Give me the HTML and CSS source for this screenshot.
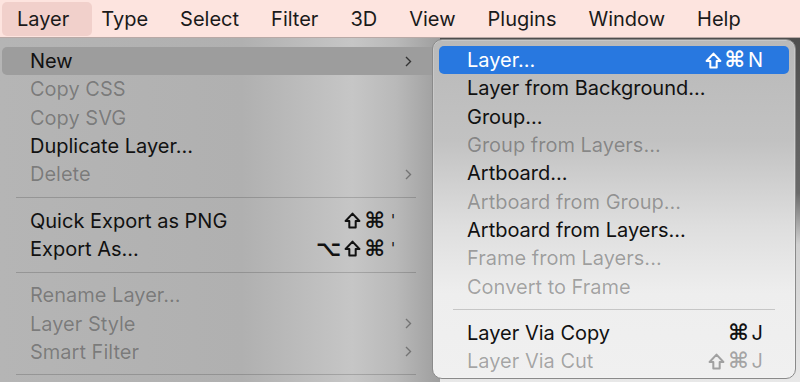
FILE: index.html
```html
<!DOCTYPE html>
<html lang="en">
<head>
  <meta charset="UTF-8">
  <title>Layer menu</title>
  <link rel="stylesheet" href="styles.css">
</head>
<body>
  <!-- menu bar -->
  <div class="menubar">
    <span class="bar-item active">Layer</span>
    <span class="bar-item">Type</span>
    <span class="bar-item">Select</span>
    <span class="bar-item">Filter</span>
    <span class="bar-item">3D</span>
    <span class="bar-item">View</span>
    <span class="bar-item">Plugins</span>
    <span class="bar-item">Window</span>
    <span class="bar-item">Help</span>
  </div>

  <div class="stage">
    <!-- Layer menu -->
    <div class="menu main-menu">
      <div class="row selected"><span>New</span><svg class="chev" viewBox="0 0 7 11"><path d="M1 1l4.5 4.5L1 10"/></svg></div>
      <div class="row off"><span>Copy CSS</span></div>
      <div class="row off"><span>Copy SVG</span></div>
      <div class="row"><span>Duplicate Layer...</span></div>
      <div class="row off"><span>Delete</span><svg class="chev" viewBox="0 0 7 11"><path d="M1 1l4.5 4.5L1 10"/></svg></div>
      <div class="sep"></div>
      <div class="row"><span>Quick Export as PNG</span>
        <span class="keys"><svg class="shift" viewBox="0 0 16 16"><path d="M8 1.5L14.5 8.5H11V14.5H5V8.5H1.5Z"/></svg><span class="sym">⌘</span><span class="tick">'</span></span></div>
      <div class="row"><span>Export As...</span>
        <span class="keys"><span class="sym">⌥</span><svg class="shift" viewBox="0 0 16 16"><path d="M8 1.5L14.5 8.5H11V14.5H5V8.5H1.5Z"/></svg><span class="sym">⌘</span><span class="tick">'</span></span></div>
      <div class="sep"></div>
      <div class="row off"><span>Rename Layer...</span></div>
      <div class="row off"><span>Layer Style</span><svg class="chev" viewBox="0 0 7 11"><path d="M1 1l4.5 4.5L1 10"/></svg></div>
      <div class="row off"><span>Smart Filter</span><svg class="chev" viewBox="0 0 7 11"><path d="M1 1l4.5 4.5L1 10"/></svg></div>
      <div class="sep"></div>
    </div>

    <div class="edge"></div>

    <!-- New submenu -->
    <div class="menu submenu">
      <div class="row active"><span>Layer...</span>
        <span class="keys"><svg class="shift" viewBox="0 0 16 16"><path d="M8 1.5L14.5 8.5H11V14.5H5V8.5H1.5Z"/></svg><span class="sym">⌘</span>N</span></div>
      <div class="row"><span>Layer from Background...</span></div>
      <div class="row"><span>Group...</span></div>
      <div class="row off"><span>Group from Layers...</span></div>
      <div class="row"><span>Artboard...</span></div>
      <div class="row off"><span>Artboard from Group...</span></div>
      <div class="row"><span>Artboard from Layers...</span></div>
      <div class="row off"><span>Frame from Layers...</span></div>
      <div class="row off"><span>Convert to Frame</span></div>
      <div class="sep"></div>
      <div class="row"><span>Layer Via Copy</span>
        <span class="keys"><span class="sym">⌘</span>J</span></div>
      <div class="row off"><span>Layer Via Cut</span>
        <span class="keys"><svg class="shift" viewBox="0 0 16 16"><path d="M8 1.5L14.5 8.5H11V14.5H5V8.5H1.5Z"/></svg><span class="sym">⌘</span>J</span></div>
    </div>
  </div>
</body>
</html>
```

FILE: styles.css
```css
html, body {
  margin: 0;
  padding: 0;
  height: 100%;
  overflow: hidden;
}
body {
  font-family: "Inter", "Noto Sans", sans-serif;
  font-size: 20px;
  color: #111;
  background: #b4b4b4;
}

/* menu bar */
.menubar {
  height: 38px;
  display: flex;
  align-items: center;
  background: #fde4df;
  border-bottom: 1px solid #b9a9a6;
  box-sizing: border-box;
  padding-left: 2px;
}
.bar-item {
  height: 34px;
  line-height: 34px;
  padding: 0 16px;
  color: #1a1a1a;
  border-radius: 5px;
}
.bar-item.active {
  padding: 0 23px 0 15px;
  margin-right: -7px;
  background: #f1d0cb;
}

.stage {
  position: relative;
  display: flex;
  height: 344px;
}

/* menus */
.menu .row {
  height: 28.3px;
  display: flex;
  align-items: center;
  justify-content: space-between;
  border-radius: 5px;
}
.menu .row.off {
  color: rgba(0, 0, 0, 0.33);
}
.keys {
  display: inline-flex;
  align-items: center;
  gap: 3px;
}
.keys .sym {
  font-family: "DejaVu Sans", sans-serif;
  font-weight: bold;
  font-size: 22px;
  line-height: 1;
}
.keys .tick {
  font-family: "DejaVu Sans", sans-serif;
  font-size: 15px;
  margin-left: 3px;
}
.shift {
  width: 17px;
  height: 17px;
  fill: none;
  stroke: currentColor;
  stroke-width: 1.9;
  stroke-linejoin: round;
}
.chev {
  width: 7px;
  height: 11px;
  fill: none;
  stroke: #333;
  stroke-width: 1.4;
}
.row.off .chev {
  stroke: rgba(0, 0, 0, 0.35);
}
.sep {
  height: 18px;
  display: flex;
  align-items: center;
}
.sep::before {
  content: "";
  flex: 1;
  height: 1px;
  background: rgba(0, 0, 0, 0.17);
}

.main-menu {
  width: 440px;
  padding-top: 9px;
  background: linear-gradient(90deg, #b5b5b5 0%, #b0b0b0 55%, #c6c6c6 80%, #b9b9b9 90%, #9e9e9e 100%);
}
.main-menu .row {
  margin: 0 0 0 2px;
  padding: 0 28px 0 28px;
}
.main-menu .row.selected {
  background: #9d9d9d;
}
.main-menu .keys {
  margin-right: 17px;
}
.main-menu .sep {
  margin: 0 24px 0 16px;
}

.edge {
  flex: 1;
  background: linear-gradient(#4e4e4e 0%, #6a6a6a 45%, #d0d0d0 60%, #e8e8e8 100%);
}

.submenu {
  position: absolute;
  left: 432px;
  top: 1px;
  width: 364px;
  height: 340px;
  box-sizing: border-box;
  padding: 6px 6px 0 6px;
  border: 1px solid #8a8a8a;
  border-radius: 10px;
  background: linear-gradient(#b9b9b9 0%, #c2c2c2 30%, #dedede 55%, #eeeeee 75%, #f0f0f0 100%);
  box-shadow: 0 0 0 0.5px rgba(255, 255, 255, 0.4) inset;
}
.submenu .row {
  padding: 0 26px 0 28px;
}
.submenu .row.active {
  background: #2878e0;
  color: #fff;
}
.submenu .sep {
  margin: 0 14px 0 14px;
}
```
